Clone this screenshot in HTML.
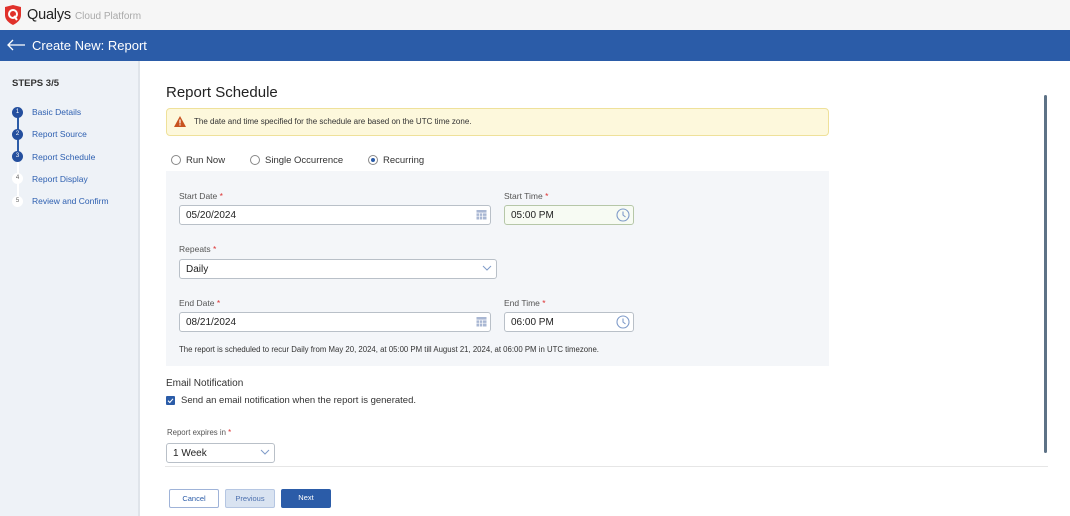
<!DOCTYPE html>
<html><head><meta charset="utf-8"><style>
*{box-sizing:border-box;margin:0;padding:0}
body{width:1070px;height:516px;overflow:hidden;background:#fff;font-family:"Liberation Sans",sans-serif;position:relative;color:#333}
.a{position:absolute}
.lbl{font-size:8.5px;color:#555}
.lbl b{color:#d33;font-weight:normal}
.inp{position:absolute;height:20px;border:1px solid #b9c0c8;border-radius:3px;background:#fff;font-size:10px;color:#222;padding:5px 6px;line-height:9px}
.step{position:absolute;left:32px;font-size:8.5px;color:#2d5fb0}
.dot{position:absolute;left:12px;width:11px;height:11px;border-radius:50%;font-size:6px;text-align:center;line-height:11px}
.btn{position:absolute;top:489px;height:19px;font-size:7.5px;text-align:center;line-height:18px;border-radius:2px}
</style></head><body>
<div class="a" style="left:0;top:0;width:1070px;height:30px;background:#f6f6f6"></div>
<svg class="a" style="left:4px;top:5px" width="18" height="20" viewBox="0 0 18 20"><path d="M9 0 L17 2 L17 10 Q17 16 9 20 Q1 16 1 10 L1 2 Z" fill="#e0312b"/><circle cx="9" cy="9" r="4" fill="none" stroke="#fff" stroke-width="2"/><path d="M10 11 L13 15" stroke="#fff" stroke-width="2"/></svg>
<div class="a" style="left:27px;top:7px;font-size:14.5px;color:#222;letter-spacing:-0.2px">Qualys<span style="font-size:10px;color:#aaa;letter-spacing:0;margin-left:4px">Cloud Platform</span></div>
<div class="a" style="left:0;top:30px;width:1070px;height:31px;background:#2b5ca8"></div>
<svg class="a" style="left:6px;top:38px" width="20" height="14"><path d="M19 7 H2 M7 2 L2 7 L7 12" stroke="#fff" stroke-width="1.3" fill="none"/></svg>
<div class="a" style="left:32px;top:38px;font-size:13px;color:#fff">Create New: Report</div>
<div class="a" style="left:0;top:61px;width:140px;height:455px;background:#eef2f7;border-right:2px solid #dfe4ea"></div>
<div class="a" style="left:12px;top:78px;font-size:9.5px;color:#333;font-weight:bold;font-family:'Liberation Sans Narrow','Liberation Sans',sans-serif">STEPS 3/5</div>
<div class="a" style="left:17px;top:112px;width:2px;height:44px;background:#2b5ca8"></div>
<div class="a" style="left:17px;top:158px;width:2px;height:44px;background:#fff"></div>
<div class="dot" style="top:107px;background:#244f9e;color:#fff">1</div>
<div class="dot" style="top:129px;background:#244f9e;color:#fff">2</div>
<div class="dot" style="top:151px;background:#244f9e;color:#fff">3</div>
<div class="dot" style="top:173px;background:#fff;color:#666">4</div>
<div class="dot" style="top:196px;background:#fff;color:#666">5</div>
<div class="step" style="top:107px">Basic Details</div>
<div class="step" style="top:129px">Report Source</div>
<div class="step" style="top:152px">Report Schedule</div>
<div class="step" style="top:174px">Report Display</div>
<div class="step" style="top:196px">Review and Confirm</div>

<div class="a" style="left:166px;top:84px;font-size:15px;color:#222">Report Schedule</div>
<div class="a" style="left:166px;top:108px;width:663px;height:28px;background:#fdf8dc;border:1px solid #efe19a;border-radius:4px"></div>
<svg class="a" style="left:174px;top:116px" width="12" height="11"><path d="M6 0 L12 11 H0Z" fill="#c8531f"/><rect x="5.4" y="3.5" width="1.2" height="4" fill="#fff"/><rect x="5.4" y="8.3" width="1.2" height="1.2" fill="#fff"/></svg>
<div class="a" style="left:194px;top:117px;font-size:8px;color:#333">The date and time specified for the schedule are based on the UTC time zone.</div>

<div class="a" style="left:171px;top:155px;width:10px;height:10px;border:1px solid #888;border-radius:50%;background:#fff"></div>
<div class="a" style="left:186px;top:155px;font-size:9.5px">Run Now</div>
<div class="a" style="left:250px;top:155px;width:10px;height:10px;border:1px solid #888;border-radius:50%;background:#fff"></div>
<div class="a" style="left:265px;top:155px;font-size:9.5px">Single Occurrence</div>
<div class="a" style="left:368px;top:155px;width:10px;height:10px;border:1px solid #888;border-radius:50%;background:#fff"></div>
<div class="a" style="left:371px;top:158px;width:4px;height:4px;border-radius:50%;background:#2b5ca8"></div>
<div class="a" style="left:383px;top:155px;font-size:9.5px">Recurring</div>

<div class="a" style="left:166px;top:171px;width:663px;height:195px;background:#f4f6f9"></div>
<div class="a lbl" style="left:179px;top:191px">Start Date <b>*</b></div>
<div class="inp" style="left:179px;top:205px;width:312px">05/20/2024</div>
<div class="a lbl" style="left:504px;top:191px">Start Time <b>*</b></div>
<div class="inp" style="left:504px;top:205px;width:130px;background:#f7fbf3;border-color:#b6c7a8">05:00 PM</div>
<div class="a lbl" style="left:179px;top:244px">Repeats <b>*</b></div>
<div class="inp" style="left:179px;top:259px;width:318px">Daily</div>
<div class="a lbl" style="left:179px;top:298px">End Date <b>*</b></div>
<div class="inp" style="left:179px;top:312px;width:312px">08/21/2024</div>
<div class="a lbl" style="left:504px;top:298px">End Time <b>*</b></div>
<div class="inp" style="left:504px;top:312px;width:130px">06:00 PM</div>
<svg class="a" style="left:476px;top:209px" width="11" height="11"><rect x="0.5" y="1" width="10" height="9.5" fill="#a9b7d3"/><path d="M0.5 4H10.5M3.5 4V10.5M6.5 4V10.5M0.5 7.2H10.5" stroke="#fff" stroke-width="0.7"/></svg>
<svg class="a" style="left:476px;top:316px" width="11" height="11"><rect x="0.5" y="1" width="10" height="9.5" fill="#a9b7d3"/><path d="M0.5 4H10.5M3.5 4V10.5M6.5 4V10.5M0.5 7.2H10.5" stroke="#fff" stroke-width="0.7"/></svg>
<svg class="a" style="left:616px;top:208px" width="14" height="14"><circle cx="7" cy="7" r="6" fill="none" stroke="#7f9bc9" stroke-width="1.1"/><path d="M7 3.5V7L9.5 9" stroke="#7f9bc9" fill="none" stroke-width="1.1"/></svg>
<svg class="a" style="left:616px;top:315px" width="14" height="14"><circle cx="7" cy="7" r="6" fill="none" stroke="#7f9bc9" stroke-width="1.1"/><path d="M7 3.5V7L9.5 9" stroke="#7f9bc9" fill="none" stroke-width="1.1"/></svg>
<svg class="a" style="left:482px;top:265px" width="10" height="6"><path d="M1 1L5 5L9 1" stroke="#7f9bc9" fill="none"/></svg>
<div class="a" style="left:179px;top:345px;font-size:7.8px;color:#333">The report is scheduled to recur Daily from May 20, 2024, at 05:00 PM till August 21, 2024, at 06:00 PM in UTC timezone.</div>

<div class="a" style="left:166px;top:378px;font-size:10px;color:#333">Email Notification</div>
<div class="a" style="left:166px;top:396px;width:9px;height:9px;background:#2b5ca8;border-radius:1px"></div>
<svg class="a" style="left:166px;top:396px" width="9" height="9"><path d="M2 4.7L3.8 6.5L7 2.8" stroke="#fff" stroke-width="1.1" fill="none"/></svg>
<div class="a" style="left:181px;top:395px;font-size:9.5px;color:#333">Send an email notification when the report is generated.</div>
<div class="a lbl" style="left:167px;top:428px;font-size:7.8px">Report expires in <b>*</b></div>
<div class="inp" style="left:166px;top:443px;width:109px">1 Week</div>
<svg class="a" style="left:260px;top:449px" width="10" height="6"><path d="M1 1L5 5L9 1" stroke="#7f9bc9" fill="none"/></svg>
<div class="a" style="left:165px;top:466px;width:883px;height:1px;background:#e6e6e6"></div>
<div class="btn" style="left:169px;width:50px;border:1px solid #9fb3d8;color:#2b5ca8;background:#fff">Cancel</div>
<div class="btn" style="left:225px;width:50px;border:1px solid #b5c6e2;color:#4b6fae;background:#d9e3f1">Previous</div>
<div class="btn" style="left:281px;width:50px;background:#2b5ca8;color:#fff">Next</div>
<div class="a" style="left:1044px;top:95px;width:3px;height:358px;background:#5d7286;border-radius:2px"></div>
</body></html>
